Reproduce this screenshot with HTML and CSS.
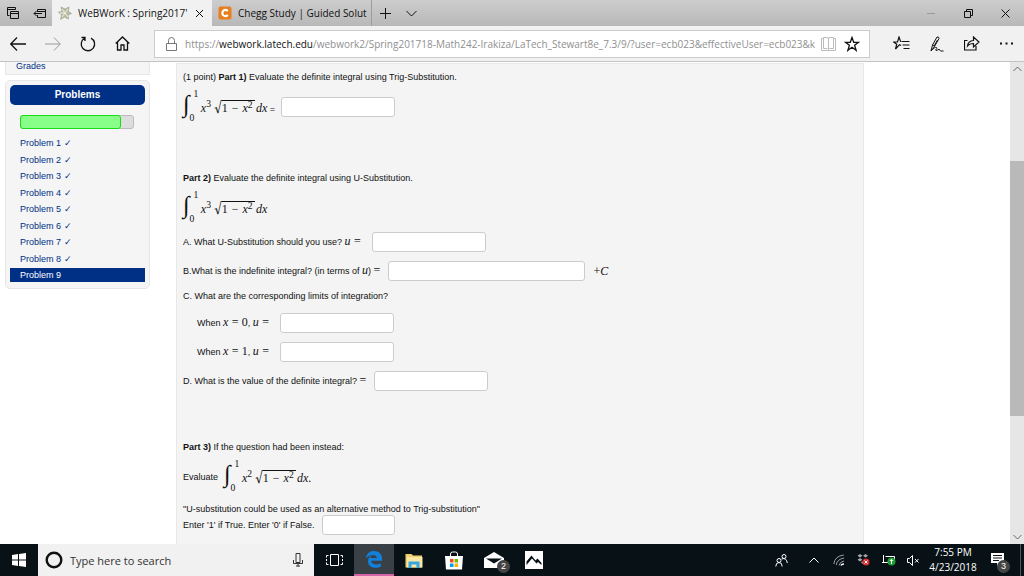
FILE: index.html
```html
<!DOCTYPE html>
<html lang="en">
<head>
  <meta charset="UTF-8">
  <title>WeBWorK : Spring201718-Math242-Irakiza</title>
  <link rel="stylesheet" href="styles.css">
</head>
<body>

  <!-- Tabs -->
  <header class="tabs">
    <div class="tab-tools">
      <button aria-label="Tabs set aside"><svg width="13" height="13" viewBox="0 0 13 13"><path d="M2.500 8.500h-2v-8h8v2M.5 2.500h8M3.500 4.500h8v7h-8zM3.500 6.500h8"/></svg></button>
      <button aria-label="Set these tabs aside"><svg width="13" height="13" viewBox="0 0 13 13"><path d="M4.500 5v-2.500h8v8h-8v-2.500M4.500 4.500h8M1 6.500h8M3.500 4l-2.500 2.500 2.500 2.500"/></svg></button>
    </div>
    <div class="tab active">
      <svg class="fav" width="14" height="14" viewBox="0 0 14 14"><path d="M3 1l4 2 4-2-.5 4.500 3 2-3.500 1.500.5 4-4-2-4 2.500 1-4.500-3-3 3.500-.5z" fill="#b9bda5" stroke="#969c84" stroke-width=".6"/><path d="M4 3l3 4 3-4M2 7h5l3 4M7 7l-3 4" stroke="#f0f0e4"/></svg>
      <span class="tab-title">WeBWorK : Spring2017'</span>
      <button aria-label="Close tab"><svg width="9" height="9" viewBox="0 0 9 9"><path d="M1 1l7 7M8 1l-7 7"/></svg></button>
    </div>
    <div class="tab">
      <svg class="fav" width="14" height="14" viewBox="0 0 14 14"><rect x=".5" y=".5" width="13" height="13" rx="2" fill="#e87e1c" stroke="none"/><path d="M9.800 5a3.100 3.100 0 1 0 0 4" stroke="#fff" stroke-width="2.200"/></svg>
      <span class="tab-title">Chegg Study | Guided Solut</span>
    </div>
    <button class="tab-btn" aria-label="New tab"><svg width="11" height="11" viewBox="0 0 11 11"><path d="M0 5.500h11M5.500 0v11"/></svg></button>
    <button class="tab-btn" aria-label="Show tab previews"><svg width="11" height="7" viewBox="0 0 11 7"><path d="M.5 1l5 5 5-5"/></svg></button>
    <div class="win-btns">
      <button class="faint" aria-label="Minimize"><svg width="9" height="9" viewBox="0 0 9 9"><path d="M0 4.500h8"/></svg></button>
      <button aria-label="Restore"><svg width="9" height="9" viewBox="0 0 9 9"><path d="M.5 2.500h6v6h-6zM2.500 2.500v-2h6v6h-2"/></svg></button>
      <button aria-label="Close"><svg width="9" height="9" viewBox="0 0 9 9"><path d="M.5.5l8 8M8.500.5l-8 8"/></svg></button>
    </div>
  </header>

  <!-- Address bar -->
  <nav class="toolbar">
    <button aria-label="Back"><svg width="16" height="14" viewBox="0 0 16 14"><path d="M7 .5l-6.300 6.500 6.300 6.500M1 7h15" stroke-width="1.300"/></svg></button>
    <button class="faint" aria-label="Forward"><svg width="16" height="14" viewBox="0 0 16 14"><path d="M9 .5l6.300 6.500-6.300 6.500M15 7h-15"/></svg></button>
    <button aria-label="Refresh"><svg width="16" height="16" viewBox="0 0 16 16"><path d="M4.500 2.300a6.700 6.700 0 1 0 6.500-.2M1.500 1.500h3.500v3.500" stroke-width="1.300"/></svg></button>
    <button aria-label="Home"><svg width="15" height="15" viewBox="0 0 15 15"><path d="M.7 7.500l6.800-6.500 6.800 6.500M2.500 6v8h3.500v-5h3v5h3.500v-8" stroke-width="1.300"/></svg></button>
    <div class="address">
      <svg width="11" height="14" viewBox="0 0 11 14"><path d="M.5 6.500h10v7h-10zM2.500 6.500v-3a3 3 0 0 1 6 0v3"/></svg>
      <a class="url" href="#">https://<b>webwork.latech.edu</b>/webwork2/Spring201718-Math242-Irakiza/LaTech_Stewart8e_7.3/9/?user=ecb023&amp;effectiveUser=ecb023&amp;k</a>
      <button class="faint" aria-label="Reading view"><svg width="15" height="14" viewBox="0 0 15 14"><path d="M.5 1.500h2v-1h3.500q1.500 0 1.500 1.500 0-1.500 1.500-1.500h3.500v1h2v12h-14zM7.500 2v11M2.500 1.500v10h4M12.500 1.500v10h-4"/></svg></button>
      <button aria-label="Add to favorites"><svg width="16" height="16" viewBox="0 0 16 16"><path d="M8 1.500l1.700 4.800h4.800l-3.900 3 1.500 4.900-4.100-3-4.100 3 1.500-4.900-3.900-3h4.800z" stroke-width="1.300"/></svg></button>
    </div>
    <button aria-label="Hub"><svg width="17" height="15" viewBox="0 0 17 15"><path d="M8.500 5.500h8M9.500 9h7M10.500 12.500h6M8 9.500l-1.500-.8-4 4.300 1.200-4.700-3-2.300h3.800l1.500-5 1.700 4.800" stroke-width="1.200"/></svg></button>
    <button aria-label="Add notes"><svg width="16" height="16" viewBox="0 0 16 16"><path d="M2 15l1.500-6 4.500-8q2-.5 2 1.500l-4.500 8-3.500 4.500q4-4.500 5.500-3.500 1 1-1 2.500 0 1 2 0t2-.5 1 1.500h3M3.500 9l2 1.500M5 10l3.500-6"/></svg></button>
    <button aria-label="Share"><svg width="16" height="15" viewBox="0 0 16 15"><path d="M3.500 4.500h-3v9.500h11.500v-4M3.500 10q.5-5 6-5.500v-3.500l5.500 5-5.500 5v-3.500q-4 0-6 2.500z" stroke-width="1.200"/></svg></button>
    <button aria-label="More"><svg width="15" height="3" viewBox="0 0 15 3"><path d="M1 1.500h2M6.500 1.500h2M12 1.500h2" stroke-width="2"/></svg></button>
  </nav>

  <main>
    <aside>
      <div class="box links"><a href="#">Grades</a></div>
      <div class="box problems">
        <h2>Problems</h2>
        <div class="progress"><div class="bar" style="width: 90%"></div></div>
        <ul>
          <li><a href="#">Problem 1 ✓</a></li>
          <li><a href="#">Problem 2 ✓</a></li>
          <li><a href="#">Problem 3 ✓</a></li>
          <li><a href="#">Problem 4 ✓</a></li>
          <li><a href="#">Problem 5 ✓</a></li>
          <li><a href="#">Problem 6 ✓</a></li>
          <li><a href="#">Problem 7 ✓</a></li>
          <li><a href="#">Problem 8 ✓</a></li>
          <li class="current"><a href="#">Problem 9</a></li>
        </ul>
      </div>
    </aside>

    <form class="problem">
      <section>
        <p class="text">(1 point) <b>Part 1)</b> Evaluate the definite integral using Trig-Substitution.</p>
        <div class="eq">
          <label for="ans1"><math><msubsup><mo class="int" stretchy="false" lspace="0" rspace="0">∫</mo><mn>0</mn><mn class="upper">1</mn></msubsup><msup><mi>x</mi><mn>3</mn></msup><msqrt><mn>1</mn><mo lspace="4px" rspace="4px">−</mo><msup><mi>x</mi><mn>2</mn></msup></msqrt><mi>dx</mi></math> =</label>
          <input type="text" id="ans1">
        </div>
      </section>

      <section>
        <p class="text"><b>Part 2)</b> Evaluate the definite integral using U-Substitution.</p>
        <div class="eq">
          <math><msubsup><mo class="int" stretchy="false" lspace="0" rspace="0">∫</mo><mn>0</mn><mn class="upper">1</mn></msubsup><msup><mi>x</mi><mn>3</mn></msup><msqrt><mn>1</mn><mo lspace="4px" rspace="4px">−</mo><msup><mi>x</mi><mn>2</mn></msup></msqrt><mi>dx</mi></math>
        </div>
        <div class="answer">
          <label for="ans2">A. What U-Substitution should you use? <math><mi>u</mi><mo>=</mo></math></label>
          <input type="text" id="ans2">
        </div>
        <div class="answer">
          <label for="ans3">B.What is the indefinite integral? (in terms of <math><mi>u</mi></math>) <math><mo lspace="0" rspace="0">=</mo></math></label>
          <input type="text" id="ans3" class="wide">
          <math><mo lspace="0">+</mo><mi>C</mi></math>
        </div>
        <p class="text limits">C. What are the corresponding limits of integration?</p>
        <div class="answer indent">
          <label for="ans4">When <math><mi>x</mi><mo>=</mo><mn>0</mn></math>, <math><mi>u</mi><mo>=</mo></math></label>
          <input type="text" id="ans4">
        </div>
        <div class="answer indent">
          <label for="ans5">When <math><mi>x</mi><mo>=</mo><mn>1</mn></math>, <math><mi>u</mi><mo>=</mo></math></label>
          <input type="text" id="ans5">
        </div>
        <div class="answer">
          <label for="ans6">D. What is the value of the definite integral? <math><mo lspace="0" rspace="0">=</mo></math></label>
          <input type="text" id="ans6">
        </div>
      </section>

      <section>
        <p class="text"><b>Part 3)</b> If the question had been instead:</p>
        <div class="eq">
          <span>Evaluate</span>
          <math><msubsup><mo class="int" stretchy="false" lspace="0" rspace="0">∫</mo><mn>0</mn><mn class="upper">1</mn></msubsup><msup><mi>x</mi><mn>2</mn></msup><msqrt><mn>1</mn><mo lspace="4px" rspace="4px">−</mo><msup><mi>x</mi><mn>2</mn></msup></msqrt><mi>dx</mi><mo lspace="0">.</mo></math>
        </div>
        <p class="quote">"U-substitution could be used as an alternative method to Trig-substitution"</p>
        <div class="true-false">
          <label for="ans7">Enter '1' if True. Enter '0' if False.</label>
          <input type="text" id="ans7" class="short">
        </div>
      </section>
    </form>

    <div class="scrollbar">
      <button aria-label="Scroll up"><svg width="9" height="6" viewBox="0 0 9 6"><path d="M.5 5l4-4 4 4"/></svg></button>
      <div class="track"><div class="thumb"></div></div>
      <button aria-label="Scroll down"><svg width="9" height="6" viewBox="0 0 9 6"><path d="M.5 1l4 4 4-4"/></svg></button>
    </div>
  </main>

  <!-- Taskbar -->
  <footer class="taskbar">
    <button class="start" aria-label="Start"><svg width="14" height="14" viewBox="0 0 14 14"><path d="M0 2l6-.9v5.400h-6zM7 1l7-1v6.500h-7zM0 7.500h6v5.400l-6-.9zM7 7.500h7v6.500l-7-1z" fill="#fff" stroke="none"/></svg></button>
    <div class="search">
      <svg width="18" height="18" viewBox="0 0 18 18"><circle cx="9" cy="9" r="7.300" stroke="#111" stroke-width="2.400"/></svg>
      <input type="text" placeholder="Type here to search" aria-label="Search">
      <button aria-label="Microphone"><svg width="10" height="14" viewBox="0 0 10 14"><path d="M3 .5h4v9h-4zM.5 7v3.500h9v-3.500M5 10.500v3M3 13h4"/></svg></button>
    </div>
    <button class="app" aria-label="Task View"><svg width="17" height="12" viewBox="0 0 17 12"><path d="M4.500.5h8v11h-8zM2.500 1.500h-2v2M.5 5v2M.5 8.500v2h2M14.500 1.500h2v2M16.500 5v2M16.500 8.500v2h-2"/></svg></button>
    <button class="app open" aria-label="Edge"><svg width="18" height="18" viewBox="0 0 18 18"><path d="M1 8.300C1.500 3.500 4.800 1 9 1c5 0 8 3.300 8 7.300v2.500h-10.800c.2 4 5.800 4.700 9.600 2.500v3.500c-5.500 2.500-12.800.5-12.800-5.600 0-3 1.500-4.600 3.500-5.500-.6.700-.8 1.500-.9 2.300h6.200c0-4.300-6.800-4-10.800.3z" fill="#1080dc" stroke="none"/></svg></button>
    <button class="app" aria-label="File Explorer"><svg width="18" height="15" viewBox="0 0 18 15"><g stroke="none"><path d="M.5 1h6l1.500 1.500h9v12h-16.500z" fill="#f3cf6c"/><path d="M2 4h15.500v10.500h-15.500z" fill="#fbe7a4"/><path d="M3.500 15v-6.500h11v6.500h-3v-3.500h-5v3.500z" fill="#35a5e5"/></g></svg></button>
    <button class="app" aria-label="Store"><svg width="20" height="19" viewBox="0 0 20 19"><path d="M6.500 5v-2q0-2 2-2h3q2 0 2 2v2" stroke="#fff"/><path d="M1 5h18l-1 13.500h-16z" fill="#fff" stroke="none"/><g stroke="none"><path d="M6 8h3.500v3.500h-3.500z" fill="#f04e1f"/><path d="M10.500 8h3.500v3.500h-3.500z" fill="#7cb700"/><path d="M6 12.500h3.500v3.500h-3.500z" fill="#00a0ea"/><path d="M10.500 12.500h3.500v3.500h-3.500z" fill="#fcb400"/></g></svg></button>
    <button class="app" aria-label="Mail"><svg width="20" height="16" viewBox="0 0 20 16"><path d="M0 6l10-6 10 6v10h-20z" fill="#fff" stroke="none"/><path d="M2 6.500h16l-8 5z" fill="#071116" stroke="none"/></svg><span class="count">2</span></button>
    <button class="app" aria-label="Photos"><svg width="18" height="18" viewBox="0 0 18 18"><path d="M0 0h18v18h-18z" fill="#fff" stroke="none"/><path d="M1.500 14v-3.500l5-6 4 5 2-2 4 4.500v2l-3.500-3-1.500 1.500-4.500-5z" fill="#071116" stroke="none"/></svg></button>
    <div class="tray">
      <button class="people" aria-label="People"><svg width="13" height="13" viewBox="0 0 13 13"><circle cx="4" cy="6.500" r="2"/><path d="M.8 12.500q0-4 3.200-4t3.200 4"/><circle cx="9" cy="2.500" r="2"/><path d="M6.500 5q2.500-1 4 .2t1.800 3.800"/></svg></button>
      <button aria-label="Show hidden icons"><svg width="10" height="6" viewBox="0 0 10 6"><path d="M.5 5.500l4.500-4.500 4.500 4.500"/></svg></button>
      <button aria-label="Wi-Fi"><svg width="12" height="12" viewBox="0 0 12 12"><path d="M.8 10q1-8 10-9M3.200 11q1-6 8-7M6 11.500q1-4 5-4.500" stroke="#9aa0a3"/><path d="M8 11.500q.5-1.500 3-1.500" stroke="#fff" stroke-width="1.500"/></svg></button>
      <button aria-label="Dropbox"><svg width="13" height="12" viewBox="0 0 13 12"><path d="M3 0l2.500 1.800-2.500 1.800-2.500-1.800zM8.500 0l2.500 1.800-2.500 1.800-2.500-1.800zM3 4l2.500 1.800-2.500 1.800-2.500-1.800zM6 7l2 1.500-2 1.500-2-1.500z" fill="#a5a9ab" stroke="none"/><circle cx="9" cy="8" r="3.500" fill="#e02b2b" stroke="none"/><path d="M7.500 6.500l3 3M10.500 6.500l-3 3" stroke="#fff"/></svg></button>
      <button aria-label="Battery"><svg width="14" height="12" viewBox="0 0 14 12"><path d="M1.500 1v7.500M4 8.500h-4M3.500 2.500h9v6h-9"/><circle cx="9.500" cy="7.500" r="4" fill="#1e9e35" stroke="none"/><path d="M9.500 10v-4.500M7.800 7l1.700-1.700 1.700 1.700" stroke="#fff"/></svg></button>
      <button aria-label="Volume muted"><svg width="13" height="11" viewBox="0 0 13 11"><path d="M.5 3.500h2l3-3v10l-3-3h-2zM8 4l3.500 3.500M11.500 4l-3.500 3.500"/></svg></button>
      <div class="clock"><span>7:55 PM</span><span>4/23/2018</span></div>
      <button class="action" aria-label="Action Center"><svg width="14" height="14" viewBox="0 0 14 14"><path d="M0 0h13v10h-4l-3 3v-3h-6z" fill="#fff" stroke="none"/><path d="M2 2.500h9M2 5h9M2 7.500h6" stroke="#071116"/></svg><span class="count">3</span></button>
      <div class="peek"></div>
    </div>
  </footer>

</body>
</html>
```
FILE: styles.css
```css
* {
  box-sizing: border-box;
}

body {
  margin: 0;
  height: 100vh;
  display: flex;
  flex-direction: column;
  overflow: hidden;
  background: #fff;
  color: #111;
  font-family: "Open Sans", "Noto Sans", sans-serif;
  font-size: 10px;
}

button {
  display: flex;
  flex: none;
  align-items: center;
  justify-content: center;
  padding: 0;
  border: none;
  background: none;
  color: inherit;
}

svg {
  flex: none;
  fill: none;
  stroke: currentColor;
}

a {
  color: inherit;
  text-decoration: none;
}

h2, p, ul {
  margin: 0;
  padding: 0;
}

/* tabs */
.tabs {
  flex: none;
  display: flex;
  height: 26px;
  background: linear-gradient(#cdcdcd, #b8b8b8);
}

.tab-tools {
  display: flex;
  justify-content: space-around;
  width: 52px;
}

.tab {
  display: flex;
  align-items: center;
  gap: 6px;
  width: 160px;
  padding: 0 4px 0 6px;
  border-right: 1px solid #9d9d9d;
}

.tab.active {
  padding-right: 8px;
  background: #f1f1f1;
  border-right: none;
}

.tab-title {
  flex: 1;
  overflow: hidden;
  white-space: nowrap;
}

.tab-btn {
  width: 26px;
}

.win-btns {
  display: flex;
  margin-left: auto;
}

.win-btns button {
  width: 37px;
}

.faint {
  color: #999;
}

/* toolbar */
.toolbar {
  flex: none;
  display: flex;
  align-items: center;
  height: 36px;
  background: #f1f1f1;
  border-bottom: 1px solid #c4c4c4;
}

.toolbar > button {
  width: 35px;
}

.address {
  flex: 1;
  min-width: 0;
  display: flex;
  align-items: center;
  height: 28px;
  margin: 0 14px;
  padding: 0 5px 0 11px;
  background: #fff;
  border: 1px solid #ccc;
  color: #777;
}

.url {
  flex: 1;
  overflow: hidden;
  margin-left: 8px;
  color: #909090;
  white-space: nowrap;
}

.url b {
  color: #111;
  font-weight: normal;
}

.address button {
  width: 24px;
}

.address button:last-child {
  color: #111;
}

.address .faint {
  color: #bbb;
}

/* page */
main {
  flex: 1;
  min-height: 0;
  display: flex;
  overflow: hidden;
  font-family: "Liberation Sans", Arial, sans-serif;
  font-size: 9px;
}

aside {
  flex: none;
  width: 145px;
  margin: 0 26px 0 5px;
  color: #002f86;
}

.box {
  background: #f5f5f5;
  border: 1px solid #e6e6e6;
}

.links {
  height: 13px;
  padding-left: 10px;
  border-top: none;
  line-height: 9px;
}

.problems {
  margin-top: 5px;
  padding: 4px;
  border-radius: 5px;
}

.problems h2 {
  background: #002f86;
  border-radius: 5px;
  color: #fff;
  font-size: 10px;
  line-height: 20px;
  text-align: center;
}

.progress {
  height: 14px;
  margin: 10px 11px 7px 10px;
  background: #ddd;
  border: 1px solid #bbb;
  border-radius: 3px;
}

.progress .bar {
  height: 14px;
  margin: -1px;
  background: #88ff88;
  border: 1px solid #16dd16;
  border-radius: 3px;
}

.problems ul {
  display: flex;
  flex-direction: column;
  justify-content: space-between;
  height: 146px;
  margin-bottom: 2px;
  list-style: none;
}

.problems li {
  padding-left: 10px;
  line-height: 14px;
}

.problems .current {
  background: #002f86;
  color: #fff;
}

.problem {
  flex: 1;
  max-width: 688px;
  margin-top: 1px;
  padding: 3px 6px;
  background: #f4f4f4;
  border: 1px solid #e8e8e8;
  border-bottom: none;
}

.problem section {
  margin-bottom: 42px;
}

.text {
  line-height: 20px;
}

.quote {
  margin-top: 5px;
  line-height: 16px;
}

.eq, .answer, .true-false {
  display: flex;
  align-items: center;
  gap: 8px;
  white-space: nowrap;
}

.eq {
  height: 39px;
  gap: 6px;
}

.eq label, .eq > math {
  padding-bottom: 2px;
}

.answer {
  height: 29px;
}

.limits {
  line-height: 23px;
}

.indent {
  padding-left: 14px;
}

.true-false {
  height: 16px;
}

math {
  font-family: "DejaVu Math TeX Gyre", "Liberation Serif", serif;
  font-size: 12px;
}

mi, mn, mo {
  font-family: "Liberation Serif", serif;
}

mi {
  font-style: italic;
  text-transform: none;
}

.int {
  font-size: 24px;
}

.upper {
  padding-left: 4px;
}

msubsup, msup {
  padding-right: 2px;
}

.problem input {
  width: 114px;
  height: 20px;
  padding: 0 4px;
  background: #fff;
  border: 1px solid #ccc;
  border-radius: 3px;
}

.problem .wide {
  width: 197px;
}

.problem .short {
  width: 73px;
}

.scrollbar {
  flex: none;
  display: flex;
  flex-direction: column;
  width: 14px;
  margin-left: auto;
  background: #e6e6e6;
  color: #666;
}

.scrollbar button {
  height: 14px;
}

.track {
  flex: 1;
  padding-top: 85px;
}

.thumb {
  height: 69%;
  background: #b9b9b9;
}

/* taskbar */
.taskbar {
  flex: none;
  display: flex;
  height: 32px;
  background: #071116;
  color: #fff;
}

.start {
  width: 38px;
}

.search {
  display: flex;
  align-items: center;
  width: 276px;
  padding: 0 11px 0 7px;
  background: #f1f1f1;
  color: #333;
  font-size: 11px;
}

.search input {
  flex: 1;
  min-width: 0;
  padding: 0 7px;
  border: none;
  background: none;
  font: inherit;
}

.search input::placeholder {
  color: #333;
}

.app, .action {
  position: relative;
  width: 40px;
}

.open {
  background: #394146;
  border-bottom: 2px solid #d565a9;
}

.count {
  position: absolute;
  right: 4px;
  bottom: 3px;
  width: 13px;
  border-radius: 50%;
  background: #444;
  font-size: 9px;
  line-height: 13px;
  text-align: center;
}

.action .count {
  right: 10px;
}

.action svg {
  margin-right: 4px;
}

.tray {
  display: flex;
  margin-left: auto;
}

.tray button {
  width: 25px;
}

.tray .people, .tray .action {
  width: 40px;
}

.clock {
  display: flex;
  flex-direction: column;
  justify-content: center;
  width: 54px;
  font-size: 10px;
  line-height: 15px;
  text-align: center;
}

.peek {
  width: 4px;
  border-left: 1px solid #555;
}
```
